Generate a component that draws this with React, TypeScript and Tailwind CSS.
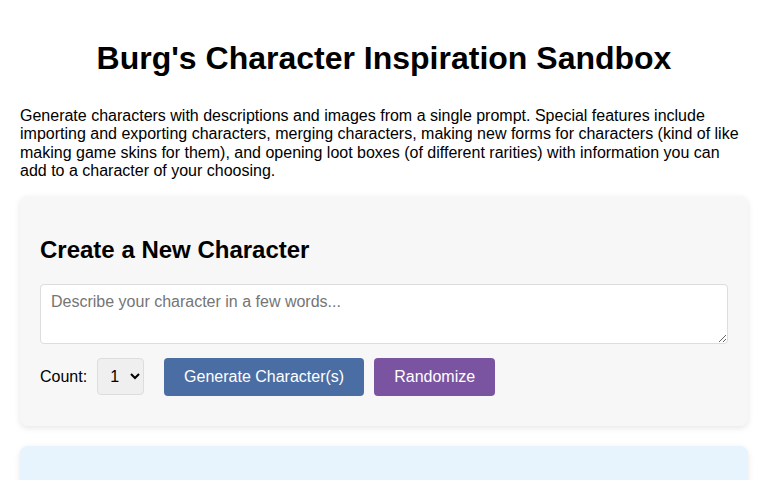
import React from 'react';

const App: React.FC = () => (
  <div className="min-h-screen bg-white p-5 text-black" style={{ fontFamily: '"Liberation Sans", Arial, sans-serif' }}>
    <h1 className="mt-5 mb-[30px] text-center text-[32px] font-bold leading-[37px]">
      Burg's Character Inspiration Sandbox
    </h1>
    <p className="mb-[15px] text-base leading-[18.4px]">
      Generate characters with descriptions and images from a single prompt. Special features include importing and
      exporting characters, merging characters, making new forms for characters (kind of like making game skins for
      them), and opening loot boxes (of different rarities) with information you can add to a character of your
      choosing.
    </p>

    <div className="rounded-lg bg-[#f7f7f7] px-5 pt-5 pb-[30px] shadow-[0_2px_6px_rgba(0,0,0,0.1)]">
      <h2 className="my-5 text-2xl font-bold leading-[28px]">Create a New Character</h2>
      <textarea
        className="mb-[14px] block h-[60px] w-full rounded border border-[#dddddd] bg-white px-[10px] py-2 text-base leading-[18px] placeholder:text-[#757575] focus:outline-none"
        placeholder="Describe your character in a few words..."
      />
      <div className="flex h-[38px] items-center">
        <label className="mr-[10px] text-base">Count:</label>
        <select className="mr-5 h-[37px] w-[47px] rounded border border-[#dddddd] bg-[#efefef] pl-[8px] pr-[2px] text-base">
          <option>1</option>
          <option>2</option>
          <option>3</option>
        </select>
        <button className="mr-[10px] h-[38px] w-[200px] rounded bg-[#4a6ea3] text-base text-white">
          Generate Character(s)
        </button>
        <button className="h-[38px] w-[121px] rounded bg-[#7b54a1] text-base text-white">Randomize</button>
      </div>
    </div>

    <div className="mt-5 h-[200px] rounded-lg bg-[#e8f4fd] shadow-[0_2px_6px_rgba(0,0,0,0.1)]" />
  </div>
);

export default App;
